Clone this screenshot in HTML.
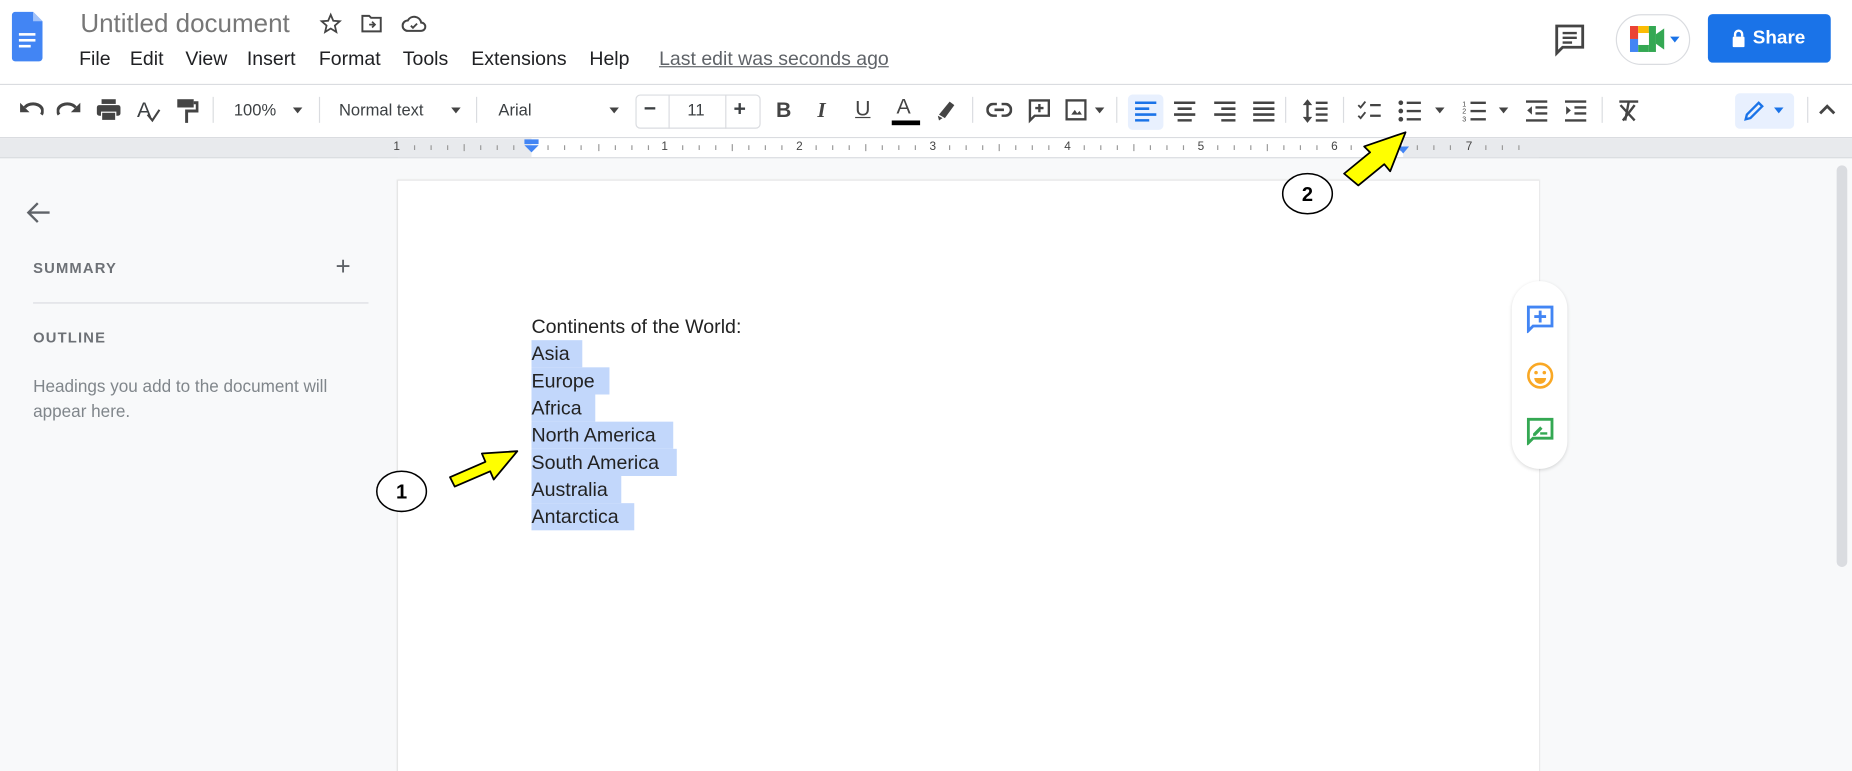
<!DOCTYPE html>
<html><head><meta charset="utf-8">
<style>
html,body{margin:0;padding:0;width:1852px;height:762px;overflow:hidden;background:#f8f9fa;font-family:"Liberation Sans",Arial,sans-serif;}
#w{position:absolute;left:0;top:0;width:1568px;height:645px;transform:scale(1.18112);transform-origin:0 0;background:#f8f9fa;}
.a{position:absolute;}
.menu span{position:absolute;top:0}
.ic{position:absolute;top:83px;}
.sep{position:absolute;top:82px;width:1px;height:22px;background:#dadce0}
.tb{position:absolute;top:85px;font-size:14px;color:#3c4043}
.dd{position:absolute;top:91px;width:0;height:0;border-left:4px solid transparent;border-right:4px solid transparent;border-top:5px solid #444}
.doc div{height:23px;line-height:23px;}
.sel{background:#c2d7fb;display:inline-block}
</style></head><body><div id="w">
<div class="a" style="left:0;top:0;width:1568px;height:71px;background:#fff;border-bottom:1px solid #dadce0"></div>
<svg class="a" style="left:10px;top:10px" width="26" height="43" viewBox="0 0 26 43"><path d="M3 0h15l8 8v31a3 3 0 0 1-3 3H3a3 3 0 0 1-3-3V3a3 3 0 0 1 3-3z" fill="#4285f4"/><path d="M18 0l8 8h-8z" fill="#a1c2fa"/><rect x="6" y="18" width="14" height="2.2" fill="#fff"/><rect x="6" y="23" width="14" height="2.2" fill="#fff"/><rect x="6" y="28" width="10" height="2.2" fill="#fff"/></svg>
<div class="a" style="left:68px;top:7px;font-size:22px;color:#777">Untitled document</div>
<svg class="a" style="left:270px;top:10px" width="20" height="20" viewBox="0 0 24 24"><path d="M12 3l2.6 6.1 6.6.5-5 4.4 1.5 6.5L12 17l-5.7 3.5 1.5-6.5-5-4.4 6.6-.5z" fill="none" stroke="#444" stroke-width="1.8"/></svg>
<svg class="a" style="left:305px;top:11px" width="20" height="18" viewBox="0 0 24 22"><path d="M2 3h7l2 2h10v14H2z" fill="none" stroke="#444" stroke-width="2"/><path d="M9 12h6M12 9l3 3-3 3" fill="none" stroke="#444" stroke-width="1.8"/></svg>
<svg class="a" style="left:340px;top:11px" width="21" height="18" viewBox="0 0 24 20"><path d="M6 17a5 5 0 0 1 0-10 7 7 0 0 1 13 2 4 4 0 0 1 0 8z" fill="none" stroke="#444" stroke-width="2"/><path d="M9 12l2 2 4-4" fill="none" stroke="#444" stroke-width="1.8"/></svg>
<div class="a menu" style="left:0;top:41px;font-size:16.5px;color:#202124;white-space:nowrap"><span style="left:67px">File</span><span style="left:110px">Edit</span><span style="left:157px">View</span><span style="left:209px">Insert</span><span style="left:270px">Format</span><span style="left:341px">Tools</span><span style="left:399px">Extensions</span><span style="left:499px">Help</span></div>
<div class="a" style="left:558px;top:41px;font-size:16.5px;color:#5f6368;text-decoration:underline">Last edit was seconds ago</div>
<svg class="a" style="left:1316px;top:20px" width="26" height="28" viewBox="0 0 26 28"><path d="M2 2h22v18H7l-5 5z" fill="none" stroke="#444" stroke-width="2.4"/><path d="M7 8h12M7 12h12M7 16h8" stroke="#444" stroke-width="2"/></svg>
<div class="a" style="left:1368px;top:12px;width:61px;height:41px;border:1px solid #dadce0;border-radius:22px;background:#fff"></div>
<svg class="a" style="left:1380px;top:22px" width="45" height="22" viewBox="0 0 45 22"><rect x="0" y="0" width="7" height="11" fill="#ea4335"/><rect x="7" y="0" width="9" height="6" fill="#fbbc04"/><rect x="0" y="11" width="7" height="11" fill="#4285f4"/><rect x="7" y="16" width="9" height="6" fill="#34a853"/><rect x="16" y="0" width="6" height="22" fill="#34a853"/><path d="M22 7l7-5v18l-7-5z" fill="#34a853"/><rect x="7" y="6" width="9" height="10" fill="#fff"/><path d="M34 9h8l-4 5z" fill="#1a73e8"/></svg>
<div class="a" style="left:1446px;top:12px;width:104px;height:41px;background:#1a73e8;border-radius:4px;color:#fff;font-size:16px;font-weight:bold;line-height:41px">
<svg style="position:absolute;left:20px;top:13px" width="12" height="15" viewBox="0 0 12 15"><rect x="1" y="6" width="10" height="9" rx="1" fill="#fff"/><path d="M3 6V4a3 3 0 0 1 6 0v2" fill="none" stroke="#fff" stroke-width="2"/></svg><span style="position:absolute;left:38px">Share</span></div>
<div class="a" style="left:0;top:72px;width:1568px;height:44px;background:#fff;border-bottom:1px solid #dadce0"></div>
<svg class="ic" style="left:15px" width="22" height="20" viewBox="0 0 22 20"><path d="M6 8a8 6 0 0 1 14 6" fill="none" stroke="#444" stroke-width="2.6"/><path d="M2 4v8h8z" fill="#444"/></svg>
<svg class="ic" style="left:48px" width="22" height="20" viewBox="0 0 22 20"><path d="M16 8a8 6 0 0 0-14 6" fill="none" stroke="#444" stroke-width="2.6"/><path d="M20 4v8h-8z" fill="#444"/></svg>
<svg class="ic" style="left:81px" width="22" height="20" viewBox="0 0 22 20"><rect x="5" y="1" width="12" height="4" fill="#444"/><rect x="1" y="6" width="20" height="9" rx="2" fill="#444"/><rect x="5" y="12" width="12" height="7" fill="#444" stroke="#fff" stroke-width="1"/></svg>
<div class="tb" style="left:116px;top:83px;font-size:18px">A</div><svg class="ic" style="left:124px;top:92px" width="12" height="12"><path d="M1 5l4 5 6-9" fill="none" stroke="#444" stroke-width="1.8"/></svg>
<svg class="ic" style="left:150px" width="18" height="22" viewBox="0 0 18 22"><rect x="0" y="1" width="14" height="7" fill="#444"/><path d="M14 4h3v7H8v10" fill="none" stroke="#444" stroke-width="2.5"/></svg>
<div class="sep" style="left:180px"></div>
<div class="tb" style="left:198px">100%</div><div class="dd" style="left:248px"></div>
<div class="sep" style="left:270px"></div>
<div class="tb" style="left:287px">Normal text</div><div class="dd" style="left:382px"></div>
<div class="sep" style="left:403px"></div>
<div class="tb" style="left:422px">Arial</div><div class="dd" style="left:516px"></div>
<div class="a" style="left:538px;top:80px;width:104px;height:27px;border:1px solid #dadce0;border-radius:4px;background:#fff"></div>
<div class="a" style="left:566px;top:80px;width:47px;height:29px;border-left:1px solid #dadce0;border-right:1px solid #dadce0"></div>
<div class="tb" style="left:545px;top:82px;font-size:18px;font-weight:bold">&minus;</div>
<div class="tb" style="left:582px">11</div>
<div class="tb" style="left:621px;top:82px;font-size:18px;font-weight:bold">+</div>
<div class="tb" style="left:657px;top:83px;font-size:18px;font-weight:bold;color:#444">B</div>
<div class="tb" style="left:692px;top:83px;font-size:18px;font-style:italic;font-family:'Liberation Serif',serif;font-weight:bold;color:#444">I</div>
<div class="tb" style="left:724px;top:82px;font-size:18px;text-decoration:underline;color:#444">U</div>
<div class="tb" style="left:759px;top:80px;font-size:18px;color:#444">A</div><div class="a" style="left:755px;top:102px;width:24px;height:4px;background:#000"></div>
<svg class="ic" style="left:791px" width="20" height="20" viewBox="0 0 20 20"><path d="M4 14l9-11 4 3-8 11z" fill="#444"/><path d="M3 15l4 2-3 2z" fill="#444"/></svg>
<div class="sep" style="left:823px"></div>
<svg class="ic" style="left:835px;top:87px" width="22" height="12" viewBox="0 0 22 12"><path d="M9 1H6a5 5 0 0 0 0 10h3M13 1h3a5 5 0 0 1 0 10h-3M7 6h8" fill="none" stroke="#444" stroke-width="2.2"/></svg>
<svg class="ic" style="left:870px" width="20" height="22" viewBox="0 0 20 22"><path d="M2 2h16v13H6l-4 4z" fill="none" stroke="#444" stroke-width="2"/><path d="M10 5v7M6.5 8.5h7" stroke="#444" stroke-width="2"/></svg>
<svg class="ic" style="left:902px" width="18" height="20" viewBox="0 0 18 20"><rect x="1" y="2" width="16" height="16" fill="none" stroke="#444" stroke-width="2"/><path d="M5 14l3-4 2 3 2-2 2 3z" fill="#444"/></svg><div class="dd" style="left:927px"></div>
<div class="sep" style="left:945px"></div>
<div class="a" style="left:955px;top:80px;width:30px;height:30px;background:#e8f0fe;border-radius:4px"></div>
<svg class="ic" style="left:960px;top:85px" width="20" height="18" viewBox="0 0 20 18"><path d="M1 2h18M1 7h12M1 12h18M1 17h12" stroke="#1a73e8" stroke-width="2.2"/></svg>
<svg class="ic" style="left:993px;top:85px" width="20" height="18" viewBox="0 0 20 18"><path d="M1 2h18M4 7h12M1 12h18M4 17h12" stroke="#444" stroke-width="2.2"/></svg>
<svg class="ic" style="left:1027px;top:85px" width="20" height="18" viewBox="0 0 20 18"><path d="M1 2h18M7 7h12M1 12h18M7 17h12" stroke="#444" stroke-width="2.2"/></svg>
<svg class="ic" style="left:1060px;top:85px" width="20" height="18" viewBox="0 0 20 18"><path d="M1 2h18M1 7h18M1 12h18M1 17h18" stroke="#444" stroke-width="2.2"/></svg>
<div class="sep" style="left:1088px"></div>
<svg class="ic" style="left:1103px" width="22" height="22" viewBox="0 0 22 22"><path d="M4 3v16" stroke="#444" stroke-width="2"/><path d="M0 6l4-5 4 5zM0 16l4 5 4-5z" fill="#444"/><path d="M11 4h10M11 9h10M11 14h10M11 19h10" stroke="#444" stroke-width="2"/></svg>
<div class="sep" style="left:1137px"></div>
<svg class="ic" style="left:1149px;top:85px" width="22" height="18" viewBox="0 0 22 18"><path d="M1 4l2 2 4-5M1 13l2 2 4-5" fill="none" stroke="#444" stroke-width="1.6"/><path d="M11 4h9M11 13h9" stroke="#444" stroke-width="2"/></svg>
<svg class="ic" style="left:1183px;top:85px" width="22" height="18" viewBox="0 0 22 18"><circle cx="3" cy="2" r="2" fill="#444"/><circle cx="3" cy="9" r="2" fill="#444"/><circle cx="3" cy="16" r="2" fill="#444"/><path d="M8 2h12M8 9h12M8 16h12" stroke="#444" stroke-width="2"/></svg><div class="dd" style="left:1215px"></div>
<svg class="ic" style="left:1238px;top:84px" width="22" height="20" viewBox="0 0 22 20"><text x="0" y="6" font-size="6" fill="#444" font-family="Liberation Sans">1</text><text x="0" y="12" font-size="6" fill="#444" font-family="Liberation Sans">2</text><text x="0" y="19" font-size="6" fill="#444" font-family="Liberation Sans">3</text><path d="M7 3h13M7 10h13M7 17h13" stroke="#444" stroke-width="2"/></svg><div class="dd" style="left:1269px"></div>
<svg class="ic" style="left:1291px;top:84px" width="20" height="20" viewBox="0 0 20 20"><path d="M1 2h18M9 7h10M9 12h10M1 18h18" stroke="#444" stroke-width="2"/><path d="M6 6v7l-4-3.5z" fill="#444"/></svg>
<svg class="ic" style="left:1324px;top:84px" width="20" height="20" viewBox="0 0 20 20"><path d="M1 2h18M9 7h10M9 12h10M1 18h18" stroke="#444" stroke-width="2"/><path d="M2 6v7l4-3.5z" fill="#444"/></svg>
<div class="sep" style="left:1356px"></div>
<svg class="ic" style="left:1369px" width="20" height="20" viewBox="0 0 20 20"><path d="M2 3h16M10 3l-3 16M3 6l12 13M15 6L5 19" stroke="#444" stroke-width="2"/></svg>
<div class="a" style="left:1469px;top:79px;width:50px;height:30px;background:#e8f0fe;border-radius:4px"></div>
<svg class="ic" style="left:1476px;top:85px" width="18" height="18" viewBox="0 0 18 18"><path d="M2 16l1-4L13 2l3 3L6 15z" fill="none" stroke="#1a73e8" stroke-width="2"/></svg><div class="dd" style="left:1502px;border-top-color:#1a73e8"></div>
<div class="sep" style="left:1530px"></div>
<svg class="ic" style="left:1540px;top:88px" width="14" height="10" viewBox="0 0 14 10"><path d="M1 8l6-6 6 6" fill="none" stroke="#444" stroke-width="2.4"/></svg>
<div class="a" style="left:0;top:117px;width:1568px;height:16px;background:#e8eaed;border-bottom:1px solid #dadce0"></div>
<div class="a" style="left:337px;top:117px;width:966px;height:16px;background:#fff"></div>
<div class="a" style="left:337px;top:117px;width:113px;height:16px;background:#e8eaed"></div>
<div class="a" style="left:1188px;top:117px;width:115px;height:16px;background:#e8eaed"></div>
<div class="a" style="left:0;top:117px;font-size:10px;color:#444;width:1568px;height:16px">
<span class="a" style="left:333px;top:2px">1</span><span class="a" style="left:560px;top:2px">1</span><span class="a" style="left:674px;top:2px">2</span><span class="a" style="left:787px;top:2px">3</span><span class="a" style="left:901px;top:2px">4</span><span class="a" style="left:1014px;top:2px">5</span><span class="a" style="left:1127px;top:2px">6</span><span class="a" style="left:1241px;top:2px">7</span>
</div>
<svg class="a" style="left:0;top:117px" width="1568" height="16"><g stroke="#999" stroke-width="1">
<path d="M351 6v4M365 6v4M379 6v4M393 5v6M407 6v4M421 6v4M435 6v4M464 6v4M478 6v4M492 6v4M507 5v6M521 6v4M535 6v4M549 6v4M578 6v4M592 6v4M606 6v4M620 5v6M634 6v4M648 6v4M662 6v4M691 6v4M705 6v4M719 6v4M733 5v6M747 6v4M761 6v4M775 6v4M804 6v4M818 6v4M832 6v4M846 5v6M860 6v4M874 6v4M888 6v4M918 6v4M932 6v4M946 6v4M960 5v6M974 6v4M988 6v4M1002 6v4M1031 6v4M1045 6v4M1059 6v4M1073 5v6M1087 6v4M1101 6v4M1115 6v4M1144 6v4M1158 6v4M1172 6v4M1186 5v6M1200 6v4M1214 6v4M1228 6v4M1258 6v4M1272 6v4M1286 6v4"/></g>
<rect x="444" y="1" width="12" height="4" fill="#4285f4"/><path d="M444 6h12l-6 6z" fill="#4285f4"/><path d="M1183 7h10l-5 6z" fill="#4285f4"/></svg>
<svg class="a" style="left:22px;top:170px" width="22" height="20" viewBox="0 0 22 20"><path d="M20 10H3M10 2L2 10l8 8" fill="none" stroke="#5f6368" stroke-width="2"/></svg>
<div class="a" style="left:28px;top:220px;font-size:12.5px;letter-spacing:1px;color:#5f6368;font-weight:bold;opacity:.9">SUMMARY</div>
<div class="a" style="left:284px;top:213px;font-size:22px;color:#5f6368">+</div>
<div class="a" style="left:28px;top:256px;width:284px;height:1px;background:#dadce0"></div>
<div class="a" style="left:28px;top:279px;font-size:12.5px;letter-spacing:1px;color:#5f6368;font-weight:bold;opacity:.9">OUTLINE</div>
<div class="a" style="left:28px;top:318px;font-size:14.5px;color:#80868b;line-height:21px;width:290px">Headings you add to the document will appear here.</div>
<div class="a" style="left:337px;top:153px;width:966px;height:500px;background:#fff;box-shadow:0 0 1px 1px #e3e3e3"></div>
<div class="a doc" style="left:450px;top:265px;font-size:16.6px;color:#222;line-height:23px">
<div>Continents of the World:</div>
<div><span class="sel" style="width:43px">Asia</span></div>
<div><span class="sel" style="width:66px">Europe</span></div>
<div><span class="sel" style="width:54px">Africa</span></div>
<div><span class="sel" style="width:120px">North America</span></div>
<div><span class="sel" style="width:123px">South America</span></div>
<div><span class="sel" style="width:76px">Australia</span></div>
<div><span class="sel" style="width:87px">Antarctica</span></div>
</div>
<div class="a" style="left:1280px;top:238px;width:47px;height:159px;background:#fff;border-radius:24px;box-shadow:0 1px 3px rgba(0,0,0,.15)"></div>
<svg class="a" style="left:1292px;top:258px" width="24" height="24" viewBox="0 0 24 24"><path d="M2 2h20v16H6l-4 4z" fill="none" stroke="#4285f4" stroke-width="2.4"/><path d="M12 5v10M7 10h10" stroke="#4285f4" stroke-width="2.4"/></svg>
<svg class="a" style="left:1292px;top:306px" width="24" height="24" viewBox="0 0 24 24"><circle cx="12" cy="12" r="10" fill="none" stroke="#f9a825" stroke-width="2.2"/><circle cx="8.5" cy="9.5" r="1.5" fill="#f9a825"/><circle cx="15.5" cy="9.5" r="1.5" fill="#f9a825"/><path d="M7 14h10a5 5 0 0 1-10 0z" fill="#f9a825"/></svg>
<svg class="a" style="left:1292px;top:353px" width="24" height="24" viewBox="0 0 24 24"><path d="M2 2h20v16H6l-4 4z" fill="none" stroke="#34a853" stroke-width="2.4"/><path d="M6 14l6-6 2 2-6 6H6z" fill="#34a853"/><path d="M12 14h6" stroke="#34a853" stroke-width="2"/></svg>
<div class="a" style="left:1555px;top:140px;width:9px;height:340px;background:#dadce0;border-radius:5px"></div>
<svg class="a" style="left:0;top:0" width="1568" height="645">
<path d="M381 404l30-13-3-7 30-2-20 24-3-7-30 13z" fill="#ffff00" stroke="#000" stroke-width="1.5" stroke-linejoin="round"/>
<ellipse cx="340" cy="416" rx="21" ry="17" fill="#fff" stroke="#000" stroke-width="1.3"/>
<text x="340" y="422" font-size="17" font-weight="bold" text-anchor="middle" font-family="Liberation Sans" fill="#000">1</text>
<path d="M1138 147l22-18-5-5 35-12-13 33-5-6-22 18z" fill="#ffff00" stroke="#000" stroke-width="1.5" stroke-linejoin="round"/>
<ellipse cx="1107" cy="164" rx="21" ry="17" fill="#fff" stroke="#000" stroke-width="1.3"/>
<text x="1107" y="170" font-size="17" font-weight="bold" text-anchor="middle" font-family="Liberation Sans" fill="#000">2</text>
</svg>
</div></body></html>
